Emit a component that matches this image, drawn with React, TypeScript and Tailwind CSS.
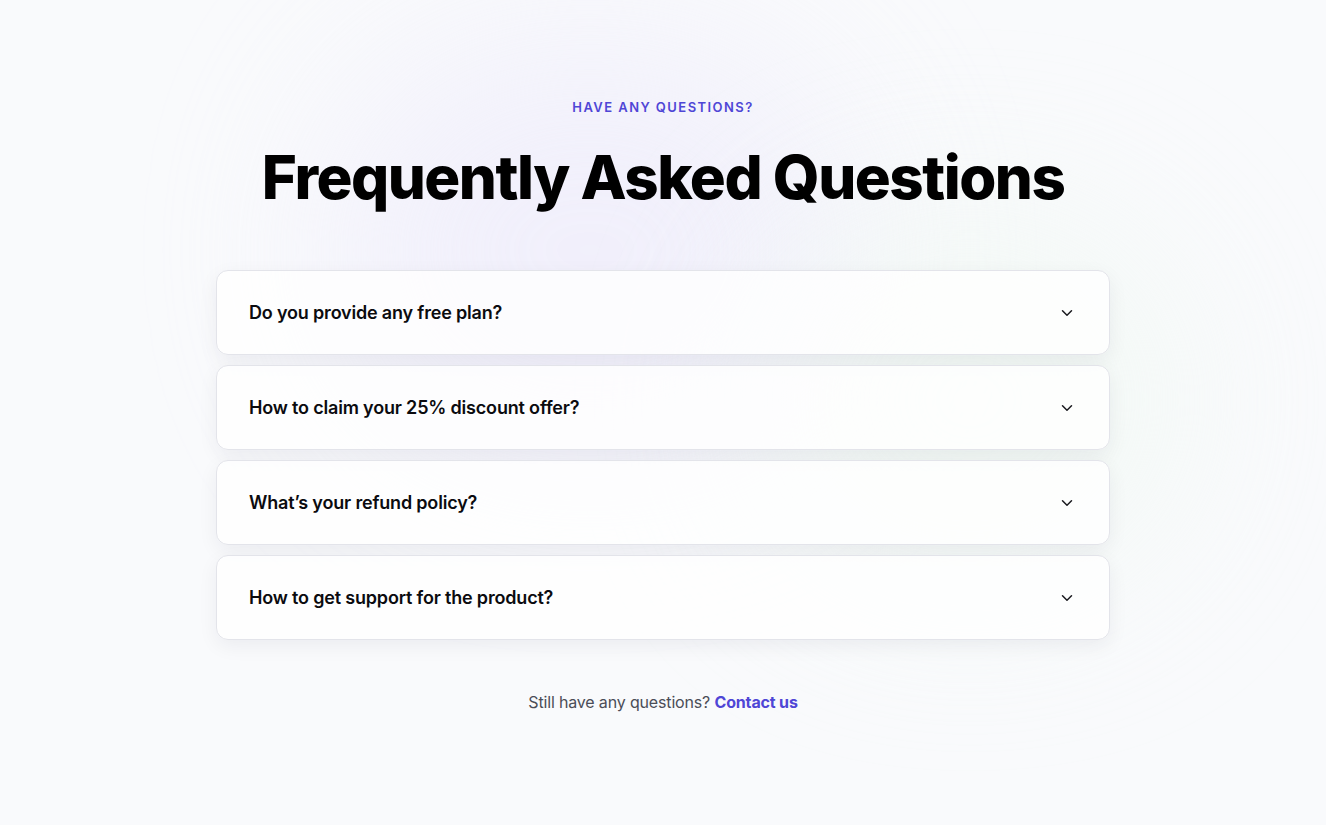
import { ChevronDown } from 'lucide-react';

const faqs = [
  'Do you provide any free plan?',
  'How to claim your 25% discount offer?',
  'What’s your refund policy?',
  'How to get support for the product?',
];

export default function App() {
  return (
    <main
      className="relative min-h-screen overflow-hidden bg-[#f9fafc] text-black"
      style={{ fontFamily: 'Inter, "Noto Sans", sans-serif' }}
    >
      {/* soft colour blobs behind the content */}
      <div className="pointer-events-none absolute left-[330px] top-[40px] h-[420px] w-[520px] rounded-full bg-[#ece9fb] opacity-60 blur-[90px]" />
      <div className="pointer-events-none absolute left-[760px] top-[220px] h-[360px] w-[420px] rounded-full bg-[#eef8f0] opacity-60 blur-[90px]" />

      <section className="relative flex flex-col items-center pt-[99px]">
        <p className="text-[13px] font-semibold uppercase leading-4 tracking-[0.11em] text-[#4f46d6]">
          Have any questions?
        </p>
        <h2 className="mt-[30px] text-[60px] font-extrabold leading-[64px] tracking-[-0.025em] text-black">
          Frequently Asked Questions
        </h2>

        <div className="mt-[61px] flex w-[894px] flex-col gap-[10px]">
          {faqs.map((q) => (
            <button
              key={q}
              className="flex h-[85px] items-center justify-between rounded-xl border border-[#e3e4ea] bg-white/80 pl-[32px] pr-[33px] text-left shadow-[0_6px_20px_rgba(20,20,50,0.06)]"
            >
              <span className="text-[18px] font-semibold tracking-[-0.01em] text-[#0b0b0f]">{q}</span>
              <ChevronDown className="h-[18px] w-[18px] text-[#1a1a1f]" strokeWidth={2} />
            </button>
          ))}
        </div>

        <p className="mt-[50px] text-[16px] tracking-[-0.01em] text-[#4b4d57]">
          Still have any questions?{' '}
          <a href="#" className="font-bold text-[#4f46d6]">
            Contact us
          </a>
        </p>
      </section>
    </main>
  );
}
